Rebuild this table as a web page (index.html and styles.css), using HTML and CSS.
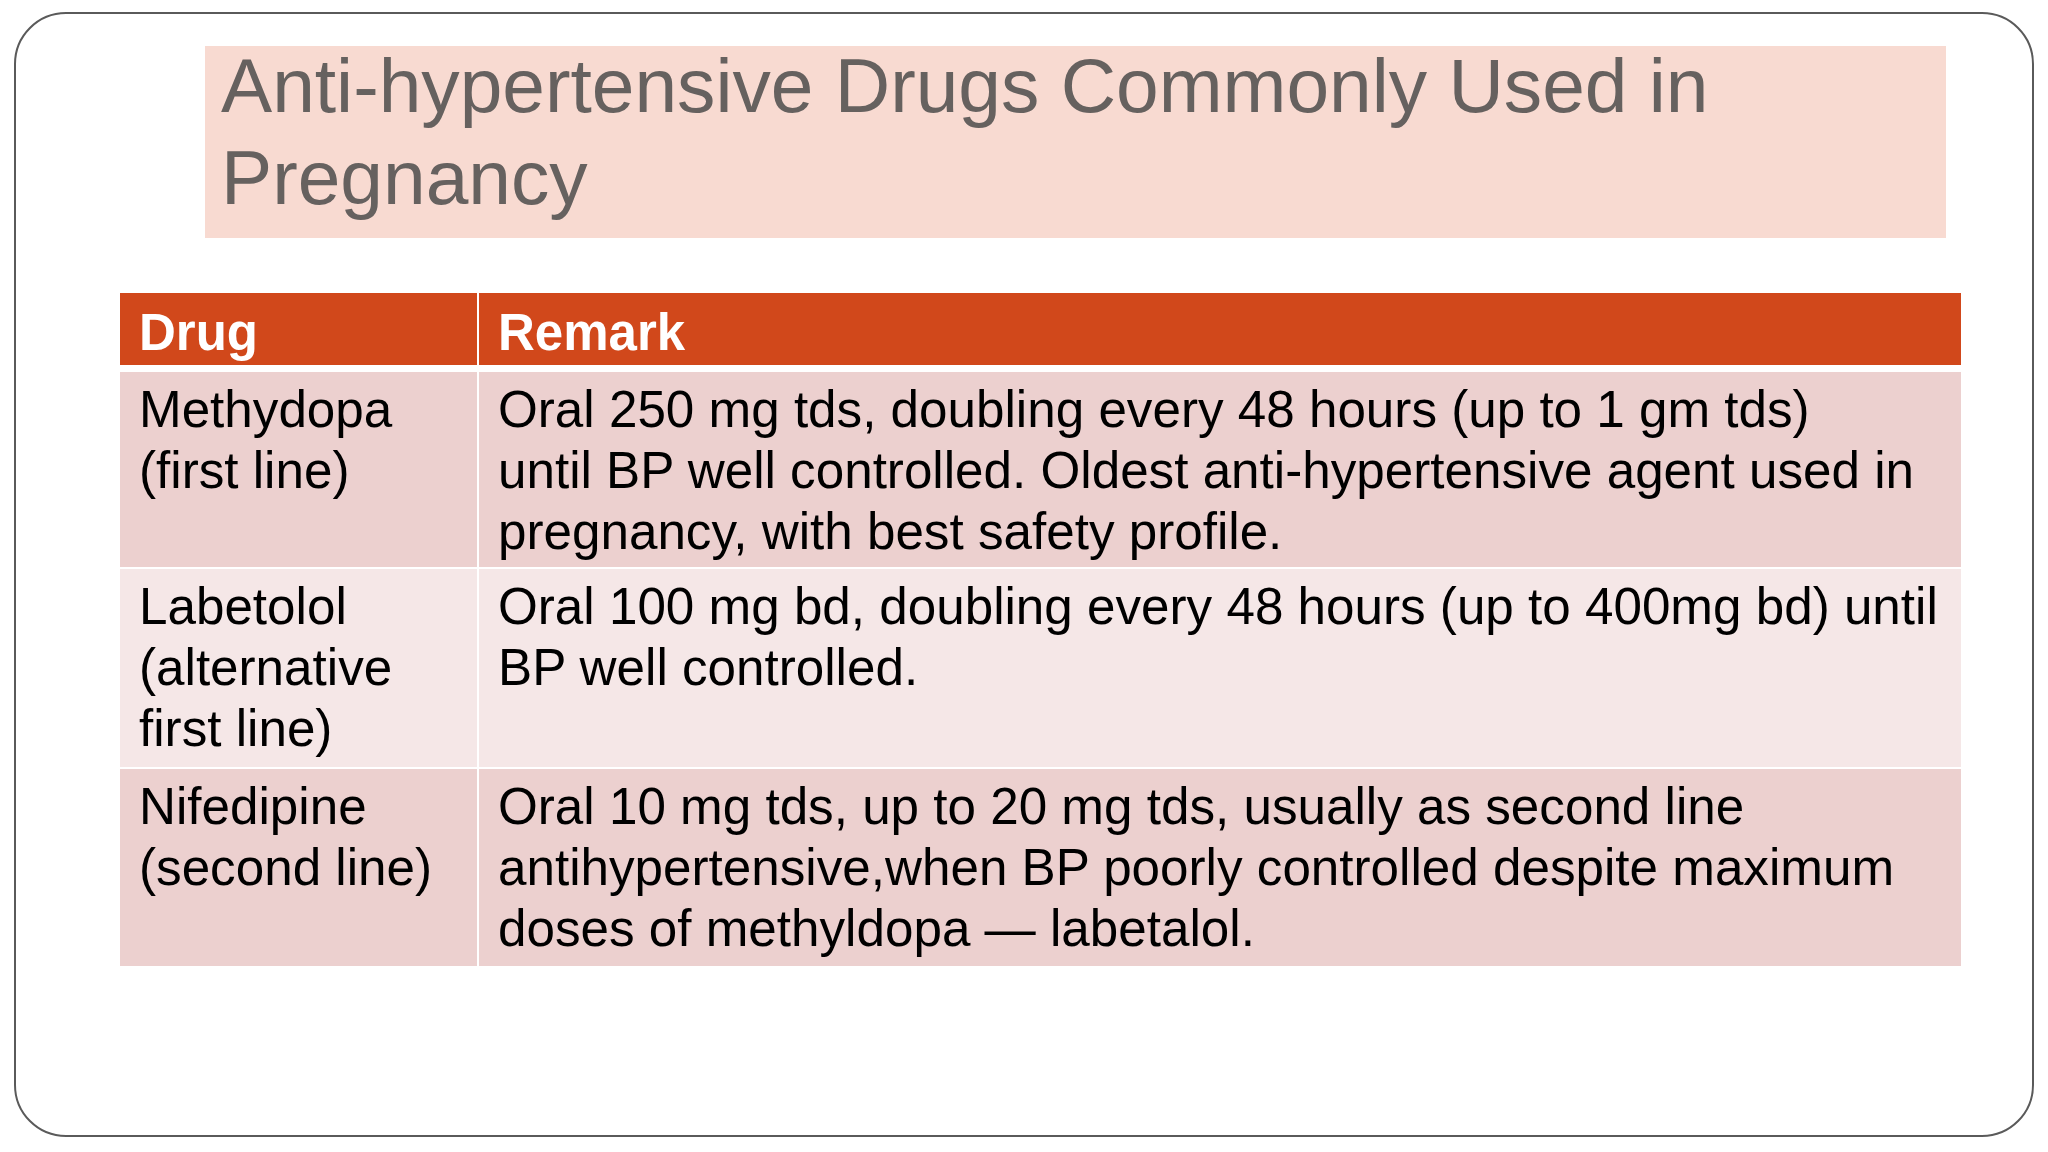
FILE: index.html
```html
<!DOCTYPE html>
<html>
<head>
<meta charset="utf-8">
<link rel="stylesheet" href="styles.css">
</head>
<body>
<div class="slide">
  <div class="title-box">
    <h1 class="title">Anti-hypertensive Drugs Commonly Used in<br>Pregnancy</h1>
  </div>
  <div class="tbl">
    <div class="row head">
      <div class="cell">Drug</div>
      <div class="cell">Remark</div>
    </div>
    <div class="row odd r1">
      <div class="cell">Methydopa<br>(first line)</div>
      <div class="cell">Oral 250 mg tds, doubling every 48 hours (up to 1 gm tds)<br>until BP well controlled. Oldest anti-hypertensive agent used in<br>pregnancy, with best safety profile.</div>
    </div>
    <div class="row even r2">
      <div class="cell">Labetolol<br>(alternative<br>first line)</div>
      <div class="cell">Oral 100 mg bd, doubling every 48 hours (up to 400mg bd) until<br>BP well controlled.</div>
    </div>
    <div class="row odd r3">
      <div class="cell">Nifedipine<br>(second line)</div>
      <div class="cell">Oral 10 mg tds, up to 20 mg tds, usually as second line<br>antihypertensive,when BP poorly controlled despite maximum<br>doses of methyldopa — labetalol.</div>
    </div>
  </div>
</div>
</body>
</html>
```

FILE: styles.css
```css
html, body {
  margin: 0;
  padding: 0;
  background: #ffffff;
}
body {
  font-family: "Liberation Sans", Arial, sans-serif;
  width: 2048px;
  height: 1152px;
  overflow: hidden;
}
.slide {
  box-sizing: border-box;
  margin: 12px 0 0 14px;
  width: 2020px;
  height: 1125px;
  border: 2px solid #5a5a5a;
  border-radius: 52px;
  background: #ffffff;
  padding-top: 32px;
}
.title-box {
  margin-left: 189px;
  width: 1741px;
  height: 192px;
  box-sizing: border-box;
  background: #f8dad1;
  padding-left: 16px;
}
.title {
  margin: 0;
  position: relative;
  top: -6px;
  font-weight: normal;
  font-size: 76.7px;
  line-height: 92px;
  color: #66615f;
  white-space: nowrap;
}
.tbl {
  margin-top: 55px;
  margin-left: 104px;
  width: 1841px;
  display: flex;
  flex-direction: column;
  gap: 2px;
}
.row {
  display: grid;
  grid-template-columns: 357px 1482px;
  column-gap: 2px;
}
.cell {
  box-sizing: border-box;
  padding: 7px 6px 0 19px;
  font-size: 51.2px;
  line-height: 61px;
  color: #000000;
  white-space: nowrap;
}
.head {
  height: 72px;
  margin-bottom: 5px;
}
.head .cell {
  background: #d1481b;
  color: #ffffff;
  font-weight: bold;
  font-size: 51px;
  padding-top: 9px;
}
.odd .cell {
  background: #ecd0cf;
}
.even .cell {
  background: #f5e7e7;
}
.r1 { height: 195px; }
.r2 { height: 198px; }
.r3 { height: 197px; }
```
